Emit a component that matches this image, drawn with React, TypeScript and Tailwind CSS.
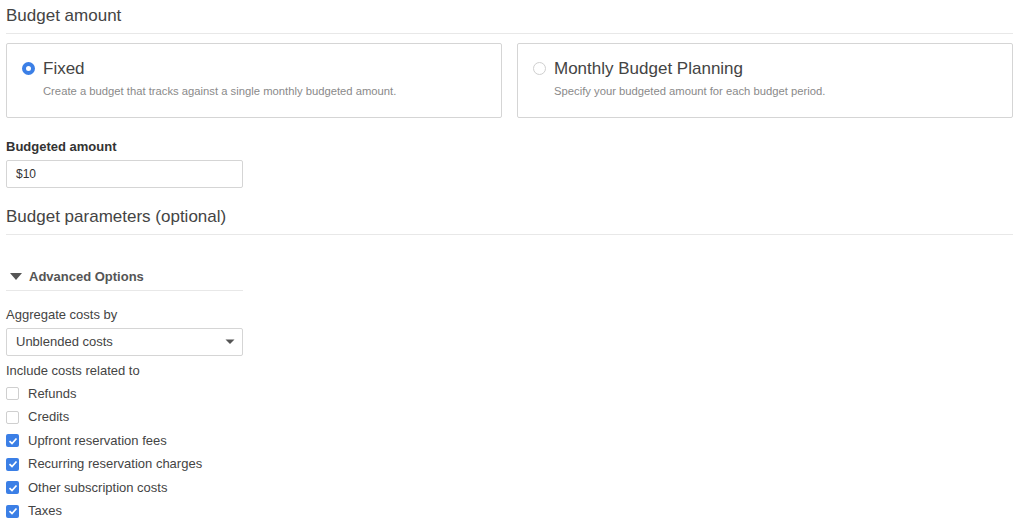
import { useState } from "react"

const CheckRow = ({ label, checked }: { label: string; checked: boolean }) => (
  <label className="flex items-center h-[23.5px] gap-[9px] text-[13px] leading-[16px] text-[#444]">
    {checked ? (
      <span className="w-[13px] h-[13px] rounded-[2px] bg-[#3b7fe6] flex items-center justify-center">
        <svg width="10" height="10" viewBox="0 0 10 10">
          <path d="M1.5 5.2 L4 7.5 L8.5 2.5" stroke="white" strokeWidth="1.7" fill="none" />
        </svg>
      </span>
    ) : (
      <span className="w-[13px] h-[13px] rounded-[2px] border border-[#cfcfcf] bg-white" />
    )}
    {label}
  </label>
)

const App = () => {
  const [mode] = useState("fixed")
  const options = [
    { label: "Refunds", checked: false },
    { label: "Credits", checked: false },
    { label: "Upfront reservation fees", checked: true },
    { label: "Recurring reservation charges", checked: true },
    { label: "Other subscription costs", checked: true },
    { label: "Taxes", checked: true },
  ]

  return (
    <div className="w-[1024px] h-[527px] overflow-hidden bg-white pl-[6px] pr-[11px] font-['Liberation_Sans',Arial,sans-serif] text-[#444]">
      {/* Budget amount */}
      <h2 className="text-[17px] leading-[22px] pt-[5px] pb-[6px] text-[#444]">Budget amount</h2>
      <div className="border-t border-[#e8e8e8]" />
      <div className="flex gap-[15px] mt-[9px]">
        <div className="flex-1 h-[75px] border border-[#d5d5d5] rounded-[2px] pl-[15px] pt-[15px]">
          <div className="flex items-center gap-[8px] h-[19px]">
            <span className="w-[13px] h-[13px] rounded-full border-[4px] border-[#3b7fe6]" />
            <span className="text-[17px] leading-[19px] text-[#444]">{mode === "fixed" ? "Fixed" : "Fixed"}</span>
          </div>
          <p className="text-[11.25px] leading-[14px] text-[#8a8a8a] pl-[21px] mt-[6px]">
            Create a budget that tracks against a single monthly budgeted amount.
          </p>
        </div>
        <div className="flex-1 h-[75px] border border-[#d5d5d5] rounded-[2px] pl-[15px] pt-[15px]">
          <div className="flex items-center gap-[8px] h-[19px]">
            <span className="w-[13px] h-[13px] rounded-full border border-[#cfcfcf]" />
            <span className="text-[17px] leading-[19px] text-[#444]">Monthly Budget Planning</span>
          </div>
          <p className="text-[11.25px] leading-[14px] text-[#8a8a8a] pl-[21px] mt-[6px]">
            Specify your budgeted amount for each budget period.
          </p>
        </div>
      </div>

      {/* Budgeted amount */}
      <div className="mt-[21px] text-[13px] leading-[16px] font-bold text-[#333]">Budgeted amount</div>
      <div className="mt-[5px] w-[237px] h-[28px] border border-[#d5d5d5] rounded-[2px] flex items-center pl-[9px] text-[12px] text-[#333]">
        $10
      </div>

      {/* Budget parameters */}
      <h2 className="text-[17px] leading-[22px] mt-[18px] pb-[6px] text-[#444]">Budget parameters (optional)</h2>
      <div className="border-t border-[#e8e8e8]" />

      <div className="w-[237px] mt-[34px]">
        <div className="flex items-center gap-[7px] pl-[4px] pb-[5px] border-b border-[#e8e8e8] h-[22px]">
          <svg width="12" height="8" viewBox="0 0 12 8">
            <path d="M0 0 H12 L6 7 Z" fill="#555" />
          </svg>
          <span className="text-[13px] leading-[16px] font-bold text-[#555]">Advanced Options</span>
        </div>
        <div className="mt-[16px] text-[13px] leading-[16px] text-[#444]">Aggregate costs by</div>
        <div className="mt-[5px] h-[28px] border border-[#d5d5d5] rounded-[2px] flex items-center justify-between pl-[9px] pr-[7px] text-[13px] text-[#444]">
          Unblended costs
          <svg width="10" height="6" viewBox="0 0 10 6">
            <path d="M0.5 0.5 H9.5 L5 5 Z" fill="#555" />
          </svg>
        </div>
        <div className="mt-[7px] text-[13px] leading-[16px] text-[#444]">Include costs related to</div>
        <div className="mt-[3px] flex flex-col">
          {options.map((o) => (
            <CheckRow key={o.label} label={o.label} checked={o.checked} />
          ))}
        </div>
      </div>
    </div>
  )
}

export default App
